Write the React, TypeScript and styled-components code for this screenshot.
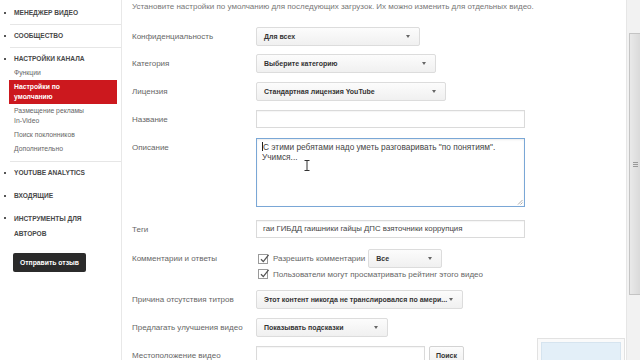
import React from "react";
import styled, { createGlobalStyle } from "styled-components";

const Global = createGlobalStyle`
    html, body {
        margin: 0;
        padding: 0;
        background: #fff;
        font-family: "Liberation Sans", Arial, sans-serif;
        overflow: hidden;
    }
`;

const Page = styled.div`
    width: 640px;
    height: 360px;
    display: flex;
    position: relative;
    overflow: hidden;
`;

const Sidebar = styled.nav`
    width: 122px;
    flex-shrink: 0;
    padding-top: 2px;
    border-right: 1px solid #e8e8e8;
    box-sizing: border-box;
`;

const Section = styled.div<{ $line?: boolean }>`
    margin-left: 10px;
    border-bottom: 1px solid ${(p) => (p.$line ? "#e6e6e6" : "transparent")};
`;

const Heading = styled.div<{ $tight?: boolean }>`
    display: flex;
    margin-left: -10px;
    padding: ${(p) => (p.$tight ? "3px 0 0" : "4px 0")};
    line-height: ${(p) => (p.$tight ? "15px" : "14px")};
    font-size: 6.6px;
    font-weight: bold;
    text-transform: uppercase;
    color: #484848;
`;

const Bullet = styled.span`
    width: 14px;
    flex-shrink: 0;
    position: relative;
    &::before {
        content: "";
        position: absolute;
        left: 4px;
        top: 6px;
        width: 2px;
        height: 2px;
        background: #555;
    }
`;

const SubList = styled.div`
    margin-top: -4px;
    padding-bottom: 5px;
`;

const SubItem = styled.div<{ $active?: boolean }>`
    width: 108px;
    margin-left: -1px;
    box-sizing: border-box;
    padding: 2px 5px;
    line-height: 10px;
    font-size: 6.8px;
    color: ${(p) => (p.$active ? "#fff" : "#666")};
    background: ${(p) => (p.$active ? "#cc181e" : "transparent")};
    font-weight: ${(p) => (p.$active ? "bold" : "normal")};
`;

const Feedback = styled.button`
    margin: 11px 0 0 13px;
    height: 19px;
    width: 73px;
    padding: 0;
    border: none;
    border-radius: 2px;
    background: #2b2b2b;
    color: #fff;
    font-family: inherit;
    font-size: 6.8px;
    font-weight: bold;
`;

const Main = styled.main`
    flex: 1;
    padding-left: 10px;
    border-right: 1px solid #e6e6e6;
`;

const Intro = styled.p`
    margin: 0 0 13px;
    line-height: 14px;
    font-size: 8px;
    color: #777;
`;

const Row = styled.div<{ $after: number }>`
    display: grid;
    grid-template-columns: 124px 1fr;
    align-items: start;
    margin-bottom: ${(p) => p.$after}px;
`;

const Label = styled.div`
    line-height: 19px;
    font-size: 8px;
    color: #666;
`;

const Select = styled.div<{ $w: number }>`
    width: ${(p) => p.$w}px;
    height: 19px;
    box-sizing: border-box;
    border: 1px solid #dcdcdc;
    border-radius: 2px;
    background: linear-gradient(#fcfcfc, #f0f0f0);
    display: flex;
    align-items: center;
    justify-content: space-between;
    padding: 0 9px 0 7px;
    font-size: 7px;
    font-weight: bold;
    color: #333;
    white-space: nowrap;
`;

const Arrow = styled.span`
    width: 0;
    height: 0;
    border-left: 2.5px solid transparent;
    border-right: 2.5px solid transparent;
    border-top: 3px solid #666;
`;

const Input = styled.div<{ $w: number; $h?: number; $focus?: boolean }>`
    width: ${(p) => p.$w}px;
    height: ${(p) => p.$h ?? 18}px;
    box-sizing: border-box;
    border: 1px solid ${(p) => (p.$focus ? "#7aa7d6" : "#dadada")};
    box-shadow: ${(p) => (p.$focus ? "inset 0 1px 2px rgba(0,0,0,.08)" : "inset 0 1px 1px rgba(0,0,0,.04)")};
    background: #fff;
    padding: ${(p) => (p.$focus ? "3px 5px" : "0 6px")};
    font-size: ${(p) => (p.$focus ? "8.3px" : "7.8px")};
    line-height: ${(p) => (p.$focus ? "10px" : "16px")};
    color: #444;
    position: relative;
`;

const Grip = styled.svg`
    position: absolute;
    right: 1px;
    bottom: 1px;
`;

const Cursor = styled.svg`
    position: absolute;
    left: 47px;
    top: 21px;
`;

const Caret = styled.span`
    display: inline-block;
    width: 1px;
    height: 9px;
    background: #222;
    vertical-align: -1px;
`;

const Checks = styled.div`
    display: flex;
    flex-direction: column;
`;

const CheckLine = styled.div`
    display: flex;
    align-items: center;
    height: 19px;
    font-size: 8px;
    color: #666;
    &:nth-child(2) {
        height: 12px;
    }
`;

const Box = styled.span`
    width: 10px;
    height: 10px;
    margin: 0 5px 0 2px;
    box-sizing: border-box;
    border: 1px solid #9a9a9a;
    background: #fff;
    position: relative;
    flex-shrink: 0;
`;

const CheckMark = styled.svg`
    position: absolute;
    left: 0;
    top: -2px;
`;

const CheckText = styled.span`
    margin-right: 3px;
`;

const Inline = styled.div`
    display: flex;
    gap: 4px;
`;

const SearchButton = styled.div`
    width: 35px;
    height: 18px;
    box-sizing: border-box;
    border: 1px solid #d3d3d3;
    border-radius: 2px;
    background: linear-gradient(#fcfcfc, #f0f0f0);
    font-size: 7px;
    font-weight: bold;
    color: #333;
    display: flex;
    align-items: center;
    justify-content: center;
`;

const Scrollbar = styled.div`
    width: 13px;
    flex-shrink: 0;
    background: #f2f2f2;
    padding-top: 33px;
    box-sizing: border-box;
`;

const Thumb = styled.div`
    margin-left: 2px;
    width: 11px;
    height: 262px;
    box-sizing: border-box;
    border: 1px solid #c4c4c4;
    border-right: none;
    background: linear-gradient(90deg, #e9e9e9, #dadada);
    display: flex;
    align-items: center;
    justify-content: center;
`;

const ThumbGrip = styled.div`
    width: 5px;
    height: 5px;
    background: repeating-linear-gradient(#999 0 1px, transparent 1px 2px);
`;

const Widget = styled.div`
    position: absolute;
    left: 537px;
    top: 338px;
    width: 88px;
    height: 30px;
    box-sizing: border-box;
    border: 1px solid #e2e2e2;
    background: #fafafa;
    padding: 3px;
`;

const WidgetInner = styled.div`
    height: 100%;
    background: #e3eff8;
    border: 1px solid #d6e4ef;
    box-sizing: border-box;
`;

function Dropdown({ w, text }: { w: number; text: string }) {
    return (
        <Select $w={w}>
            <span>{text}</span>
            <Arrow />
        </Select>
    );
}

function Check({ children }: { children: React.ReactNode }) {
    return (
        <>
            <Box>
                <CheckMark width="11" height="11" viewBox="0 0 11 11">
                    <path d="M2 6.2 L4.3 8.6 L9.6 1.8" fill="none" stroke="#555" strokeWidth="1.3" />
                </CheckMark>
            </Box>
            <CheckText>{children}</CheckText>
        </>
    );
}

export default function App() {
    return (
        <Page>
            <Global />
            <Sidebar>
                <Section $line>
                    <Heading><Bullet />Менеджер видео</Heading>
                </Section>
                <Section $line>
                    <Heading><Bullet />Сообщество</Heading>
                </Section>
                <Section $line>
                    <Heading><Bullet />Настройки канала</Heading>
                    <SubList>
                        <SubItem>Функции</SubItem>
                        <SubItem $active>Настройки по<br />умолчанию</SubItem>
                        <SubItem>Размещение рекламы<br />In-Video</SubItem>
                        <SubItem>Поиск поклонников</SubItem>
                        <SubItem>Дополнительно</SubItem>
                    </SubList>
                </Section>
                <Section>
                    <Heading><Bullet />YouTube Analytics</Heading>
                </Section>
                <Section>
                    <Heading><Bullet />Входящие</Heading>
                </Section>
                <Section>
                    <Heading $tight><Bullet />Инструменты для<br />авторов</Heading>
                </Section>
                <Feedback>Отправить отзыв</Feedback>
            </Sidebar>

            <Main>
                <Intro>
                    Установите настройки по умолчанию для последующих загрузок. Их можно изменить для отдельных видео.
                </Intro>
                <Row $after={8}>
                    <Label>Конфиденциальность</Label>
                    <Dropdown w={164} text="Для всех" />
                </Row>
                <Row $after={9}>
                    <Label>Категория</Label>
                    <Dropdown w={180} text="Выберите категорию" />
                </Row>
                <Row $after={9}>
                    <Label>Лицензия</Label>
                    <Dropdown w={190} text="Стандартная лицензия YouTube" />
                </Row>
                <Row $after={9}>
                    <Label>Название</Label>
                    <Input $w={269} />
                </Row>
                <Row $after={13}>
                    <Label>Описание</Label>
                    <Input $w={269} $h={69} $focus>
                        <Caret />С этими ребятами надо уметь разговаривать "по понятиям".
                        <br />
                        Учимся...
                        <Cursor width="6" height="11" viewBox="0 0 6 11">
                            <path d="M0.5 0.5 H5.5 M3 0.5 V10.5 M0.5 10.5 H5.5" stroke="#333" strokeWidth="1" fill="none" />
                        </Cursor>
                        <Grip width="6" height="6" viewBox="0 0 6 6">
                            <path d="M1 5.5 L5.5 1 M3.5 5.5 L5.5 3.5" stroke="#999" strokeWidth="0.8" />
                        </Grip>
                    </Input>
                </Row>
                <Row $after={10}>
                    <Label>Теги</Label>
                    <Input $w={269}>гаи ГИБДД гаишники гайцы ДПС взяточники коррупция</Input>
                </Row>
                <Row $after={10}>
                    <Label>Комментарии и ответы</Label>
                    <Checks>
                        <CheckLine>
                            <Check>Разрешить комментарии</Check>
                            <Dropdown w={74} text="Все" />
                        </CheckLine>
                        <CheckLine>
                            <Check>Пользователи могут просматривать рейтинг этого видео</Check>
                        </CheckLine>
                    </Checks>
                </Row>
                <Row $after={9}>
                    <Label>Причина отсутствия титров</Label>
                    <Dropdown w={207} text="Этот контент никогда не транслировался по амери..." />
                </Row>
                <Row $after={9}>
                    <Label>Предлагать улучшения видео</Label>
                    <Dropdown w={132} text="Показывать подсказки" />
                </Row>
                <Row $after={0}>
                    <Label>Местоположение видео</Label>
                    <Inline>
                        <Input $w={169} />
                        <SearchButton>Поиск</SearchButton>
                    </Inline>
                </Row>
            </Main>

            <Scrollbar>
                <Thumb>
                    <ThumbGrip />
                </Thumb>
            </Scrollbar>

            <Widget>
                <WidgetInner />
            </Widget>
        </Page>
    );
}
